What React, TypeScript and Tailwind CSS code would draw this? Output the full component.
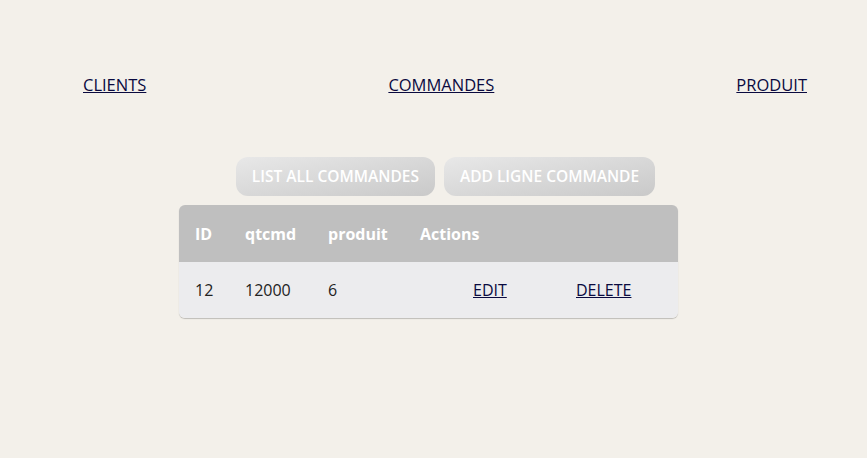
import React from "react";

export default function App() {
  const font = { fontFamily: '"Open Sans", "Liberation Sans", sans-serif' };
  return (
    <div className="w-[867px] h-[458px] bg-[#f3f0ea] text-[#222]" style={font}>
      <nav className="flex justify-between pl-[83px] pr-[60px] pt-[74px]">
        <a href="#" className="text-[16.5px] leading-[22px] font-medium text-[#0a0a3f] underline">CLIENTS</a>
        <a href="#" className="text-[16.5px] leading-[22px] font-medium text-[#0a0a3f] underline">COMMANDES</a>
        <a href="#" className="text-[16.5px] leading-[22px] font-medium text-[#0a0a3f] underline">PRODUIT</a>
      </nav>
      <div className="flex justify-center gap-[9px] mt-[61px] pl-[24px]">
        <button className="h-[39px] px-[16px] rounded-[12px] bg-gradient-to-br from-[#e8e8e8] to-[#c9c9c9] text-white font-semibold text-[15.5px]">
          LIST ALL COMMANDES
        </button>
        <button className="h-[39px] px-[16px] rounded-[12px] bg-gradient-to-br from-[#e8e8e8] to-[#c9c9c9] text-white font-semibold text-[15.5px]">
          ADD LIGNE COMMANDE
        </button>
      </div>
      <div className="ml-[179px] mt-[9px] w-[499px] rounded-[6px] overflow-hidden shadow-[0_1px_1px_rgba(0,0,0,0.22)]">
        <table className="w-full table-fixed border-collapse text-left">
          <colgroup>
            <col className="w-[50px]" />
            <col className="w-[83px]" />
            <col className="w-[92px]" />
            <col className="w-[156px]" />
            <col className="w-[118px]" />
          </colgroup>
          <thead>
            <tr className="bg-[#bfbfbf] h-[57px] text-white font-bold text-[16px]">
              <th className="pl-[16px] font-bold">ID</th>
              <th className="pl-[16px] font-bold">qtcmd</th>
              <th className="pl-[16px] font-bold">produit</th>
              <th className="pl-[16px] font-bold">Actions</th>
              <th></th>
            </tr>
          </thead>
          <tbody>
            <tr className="bg-[#ececee] h-[56px] text-[16px] text-[#222]">
              <td className="pl-[16px]">12</td>
              <td className="pl-[16px]">12000</td>
              <td className="pl-[16px]">6</td>
              <td className="pl-[69px]">
                <a href="#" className="font-medium text-[#0a0a3f] underline">EDIT</a>
              </td>
              <td className="pl-[16px]">
                <a href="#" className="font-medium text-[#0a0a3f] underline">DELETE</a>
              </td>
            </tr>
          </tbody>
        </table>
      </div>
    </div>
  );
}
